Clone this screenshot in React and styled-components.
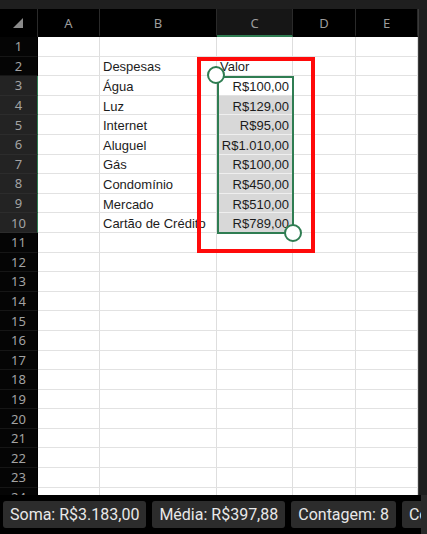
import React from 'react'
import styled, { createGlobalStyle } from 'styled-components'

const ROW_H = 19.6
const HEAD_H = 28
const COLS = [38, 62, 117, 76, 63, 62]
const LETTERS = ['A', 'B', 'C', 'D', 'E']

const despesas = [
  ['Despesas', 'Valor'],
  ['Água', 'R$100,00'],
  ['Luz', 'R$129,00'],
  ['Internet', 'R$95,00'],
  ['Aluguel', 'R$1.010,00'],
  ['Gás', 'R$100,00'],
  ['Condomínio', 'R$450,00'],
  ['Mercado', 'R$510,00'],
  ['Cartão de Crédito', 'R$789,00'],
]

const stats = ['Soma: R$3.183,00', 'Média: R$397,88', 'Contagem: 8', 'Contagem num.: 8']

const GlobalStyle = createGlobalStyle`
  html, body { margin: 0; padding: 0; background: #000; }
  body { width: 427px; height: 534px; overflow: hidden; }
`

const Screen = styled.div`
  width: 427px;
  height: 534px;
  display: flex;
  flex-direction: column;
  background: #000;
  overflow: hidden;
`

const TopBar = styled.div`
  height: 9px;
  background: #1f1f1f;
  flex-shrink: 0;
`

const Middle = styled.div`
  display: flex;
  height: 486px;
  flex-shrink: 0;
`

const Sheet = styled.div`
  position: relative;
  width: 418px;
  height: 486px;
  overflow: hidden;
  display: grid;
  grid-template-columns: ${COLS.map(c => c + 'px').join(' ')};
  grid-template-rows: ${HEAD_H}px repeat(24, ${ROW_H}px);
  background: #fff;
`

const Strip = styled.div`
  width: 9px;
  background: #1e1e1e;
  border-left: 1px solid #3a3a3a;
  box-sizing: border-box;
`

const Corner = styled.div`
  background: #000;
  border-right: 1px solid #2a2a2a;
  position: relative;
  &::after {
    content: '';
    position: absolute;
    left: 13px;
    top: 9px;
    width: 0;
    height: 0;
    border-left: 10px solid transparent;
    border-bottom: 10px solid #8a8a8a;
  }
`

const ColHead = styled.div`
  background: ${p => (p.$sel ? '#161616' : '#000')};
  border-right: 1px solid #2a2a2a;
  border-bottom: 2px solid ${p => (p.$sel ? '#2f7d52' : '#000')};
  box-sizing: border-box;
  color: #9c9c9c;
  font: 400 13px 'Noto Sans', sans-serif;
  display: flex;
  align-items: center;
  justify-content: center;
  padding-top: 2px;
`

const RowHead = styled.div`
  background: ${p => (p.$sel ? '#232323' : '#050505')};
  border-bottom: 1px solid ${p => (p.$sel ? '#2c2c2c' : '#161616')};
  border-right: 1px solid ${p => (p.$sel ? '#2f7d52' : '#000')};
  box-sizing: border-box;
  color: #a3a3a3;
  font: 400 13px 'Noto Sans', sans-serif;
  display: flex;
  align-items: center;
  justify-content: center;
`

const Cell = styled.div`
  background: ${p => (p.$fill ? '#d8d8d8' : '#fff')};
  border-right: 1px solid ${p => (p.$fill ? '#ececec' : '#dedede')};
  border-bottom: 1px solid ${p => (p.$fill ? '#efefef' : '#e2e2e2')};
  box-sizing: border-box;
  color: #1c1c1c;
  font: 400 13px 'Liberation Sans', Arial, sans-serif;
  display: flex;
  align-items: center;
  justify-content: ${p => (p.$right ? 'flex-end' : 'flex-start')};
  padding: 2px 3px 0;
  white-space: nowrap;
  overflow: visible;
  position: relative;
  z-index: ${p => (p.$over ? 2 : 1)};
`

const Selection = styled.div`
  position: absolute;
  left: ${p => p.$x}px;
  top: ${p => p.$y}px;
  width: ${p => p.$w}px;
  height: ${p => p.$h}px;
  border: 2px solid #2f7d52;
  box-sizing: border-box;
  z-index: 3;
  pointer-events: none;
`

const Handle = styled.div`
  position: absolute;
  left: ${p => p.$x - 9}px;
  top: ${p => p.$y - 9}px;
  width: 18px;
  height: 18px;
  border-radius: 50%;
  border: 2px solid #2f7d52;
  background: #fff;
  box-sizing: border-box;
  z-index: 4;
`

const Annotation = styled.div`
  position: absolute;
  left: ${p => p.$x}px;
  top: ${p => p.$y}px;
  width: ${p => p.$w}px;
  height: ${p => p.$h}px;
  border: 4px solid #ff0a0a;
  box-sizing: border-box;
  z-index: 5;
`

const StatusBar = styled.div`
  flex: 1;
  display: flex;
  background: #000;
`

const Chips = styled.div`
  width: 421px;
  display: flex;
  gap: 6px;
  padding: 6px 0 0 3px;
  box-sizing: border-box;
  overflow: hidden;
`

const Chip = styled.div`
  height: 27px;
  padding: 0 7px;
  border-radius: 3px;
  background: #2c2c2c;
  color: #e8e8e8;
  font: 400 16px Roboto, sans-serif;
  display: flex;
  align-items: center;
  white-space: nowrap;
  flex-shrink: 0;
`

const StatusEdge = styled.div`
  flex: 1;
  background: #2a2a2a;
`

const colX = i => COLS.slice(0, i).reduce((a, b) => a + b, 0)

export default function App() {
  const rows = Array.from({ length: 24 }, (_, i) => i + 1)
  const selTop = HEAD_H + 2 * ROW_H
  const selBottom = HEAD_H + 10 * ROW_H
  const cLeft = colX(3)
  const cRight = colX(4)

  return (
    <>
      <GlobalStyle />
      <Screen>
        <TopBar />
        <Middle>
          <Sheet>
            <Corner />
            {LETTERS.map(l => (
              <ColHead key={l} $sel={l === 'C'}>{l}</ColHead>
            ))}
            {rows.map(r => {
              const data = r >= 2 && r <= 10 ? despesas[r - 2] : null
              const sel = r >= 3 && r <= 10
              return (
                <React.Fragment key={r}>
                  <RowHead $sel={sel}>{r}</RowHead>
                  <Cell />
                  <Cell $over>{data ? data[0] : ''}</Cell>
                  <Cell $right={r > 2} $fill={r >= 4 && r <= 10}>{data ? data[1] : ''}</Cell>
                  <Cell />
                  <Cell />
                </React.Fragment>
              )
            })}
            <Selection $x={cLeft} $y={selTop} $w={cRight - cLeft + 1} $h={selBottom - selTop + 1} />
            <Handle $x={cLeft - 1} $y={selTop - 1} />
            <Handle $x={cRight} $y={selBottom} />
            <Annotation $x={197} $y={48} $w={118} $h={196} />
          </Sheet>
          <Strip />
        </Middle>
        <StatusBar>
          <Chips>
            {stats.map(s => (
              <Chip key={s}>{s}</Chip>
            ))}
          </Chips>
          <StatusEdge />
        </StatusBar>
      </Screen>
    </>
  )
}
